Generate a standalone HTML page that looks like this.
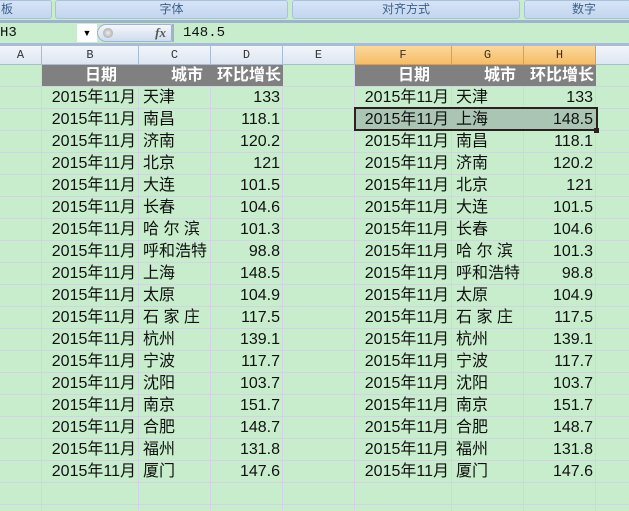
<!DOCTYPE html>
<html><head><meta charset="utf-8"><style>
body{margin:0;width:629px;height:511px;overflow:hidden;background:#c7edcc;position:relative;font-family:"Liberation Sans","Noto Sans CJK SC",sans-serif;}
.a{position:absolute;box-sizing:border-box;}
.rib{background:linear-gradient(#d6e4f5,#c2d6ef);border:1px solid #a9c0de;border-radius:3px;color:#3d5f8c;font-size:12px;text-align:center;line-height:16px;}
.ch{top:46px;height:19px;background:linear-gradient(#f2f5fa,#dde6f2);border-right:1px solid #a9bcd6;border-bottom:1px solid #a9bcd6;font-family:"Liberation Mono",monospace;font-size:12px;text-align:center;line-height:19px;color:#333;}
.chs{background:linear-gradient(#fbd89c,#f5bd66);border-right:1px solid #e99a3c;border-bottom:1px solid #e99a3c;}
.vl{top:65px;width:1px;height:446px;background:#d2d4e4;}
.hl{left:0;width:629px;height:1px;background:#d2d4e4;}
.c{position:absolute;height:22px;line-height:22px;font-size:16px;color:#111;white-space:nowrap;}
.h{background:#808080;color:#fff;font-weight:bold;font-size:16px;}
</style></head><body>
<div class="a rib" style="left:-10px;top:0;width:62px;height:19px;text-align:left;padding-left:10px">板</div>
<div class="a rib" style="left:55px;top:0;width:233px;height:19px">字体</div>
<div class="a rib" style="left:292px;top:0;width:228px;height:19px">对齐方式</div>
<div class="a rib" style="left:524px;top:0;width:120px;height:19px">数字</div>
<div class="a" style="left:0;top:20px;width:629px;height:3px;background:#9fb3cc"></div>
<div class="a" style="left:0;top:23px;width:629px;height:20px;background:#c7edcc"></div>
<div class="a" style="left:0;top:24px;width:77px;height:18px;font-family:'Liberation Mono',monospace;font-size:14px;line-height:18px;color:#111">H3</div>
<div class="a" style="left:77px;top:24px;width:20px;height:18px;background:#fff;font-size:9px;text-align:center;line-height:18px">▼</div>
<div class="a" style="left:97px;top:24px;width:75px;height:18px;background:linear-gradient(#f4f7fc,#cfdcee);border:1px solid #9fb3cc;border-radius:9px 2px 2px 9px;font-family:'Liberation Serif',serif;font-style:italic;font-weight:bold;font-size:13px;text-align:right;padding-right:5px;line-height:16px;color:#555">fx</div>
<div class="a" style="left:103px;top:28px;width:10px;height:10px;border-radius:5px;background:radial-gradient(#eee,#999)"></div>
<div class="a" style="left:172px;top:24px;width:2px;height:18px;background:#9fb3cc"></div>
<div class="a" style="left:183px;top:24px;height:18px;font-family:'Liberation Mono',monospace;font-size:14px;line-height:18px;color:#111">148.5</div>
<div class="a" style="left:0;top:43px;width:629px;height:3px;background:#a9bcd6"></div>
<div class="a ch" style="left:0;width:42px">A</div>
<div class="a ch" style="left:42px;width:97px">B</div>
<div class="a ch" style="left:139px;width:72px">C</div>
<div class="a ch" style="left:211px;width:72px">D</div>
<div class="a ch" style="left:283px;width:72px">E</div>
<div class="a ch chs" style="left:355px;width:97px">F</div>
<div class="a ch chs" style="left:452px;width:72px">G</div>
<div class="a ch chs" style="left:524px;width:72px">H</div>
<div class="a ch" style="left:596px;width:40px"></div>
<div id="g"></div>
<script>
var d=[["天津",133],["南昌",118.1],["济南",120.2],["北京",121],["大连",101.5],["长春",104.6],["哈 尔 滨",101.3],["呼和浩特",98.8],["上海",148.5],["太原",104.9],["石 家 庄",117.5],["杭州",139.1],["宁波",117.7],["沈阳",103.7],["南京",151.7],["合肥",148.7],["福州",131.8],["厦门",147.6]];
var d2=[d[0],["上海",148.5]].concat(d.slice(1).filter(function(x){return x[0]!="上海"}));
var h="";
[42,139,211,283,355,452,524,596].forEach(function(x){h+='<div class="a vl" style="left:'+(x-1)+'px"></div>'});
for(var i=1;i<21;i++)h+='<div class="a hl" style="top:'+(64+22*i)+'px"></div>';
function tbl(x,data){
 h+='<div class="c h" style="left:'+x+'px;top:65px;width:97px;height:21px;text-align:right;padding-right:22px;box-sizing:border-box">日期</div>';
 h+='<div class="c h" style="left:'+(x+97)+'px;top:65px;width:72px;height:21px;text-align:right;padding-right:8px;box-sizing:border-box">城市</div>';
 h+='<div class="c h" style="left:'+(x+169)+'px;top:65px;width:72px;height:21px;text-align:right;padding-right:2px;box-sizing:border-box">环比增长</div>';
 data.forEach(function(r,i){var t=87+22*i;
  h+='<div class="c" style="left:'+x+'px;top:'+t+'px;width:94px;text-align:right">2015年11月</div>';
  h+='<div class="c" style="left:'+(x+101)+'px;top:'+t+'px">'+r[0]+'</div>';
  h+='<div class="c" style="left:'+(x+169)+'px;top:'+t+'px;width:69px;text-align:right">'+r[1]+'</div>';});
}
h+='<div class="a" style="left:355px;top:109px;width:241px;height:21px;background:#aac5b4"></div>';
tbl(42,d);tbl(355,d2);
h+='<div class="a" style="left:354px;top:107px;width:244px;height:24px;border:2px solid #2b2020"></div>';
h+='<div class="a" style="left:594px;top:128px;width:5px;height:5px;background:#2b2020"></div>';
document.getElementById("g").innerHTML=h;
</script>
</body></html>
